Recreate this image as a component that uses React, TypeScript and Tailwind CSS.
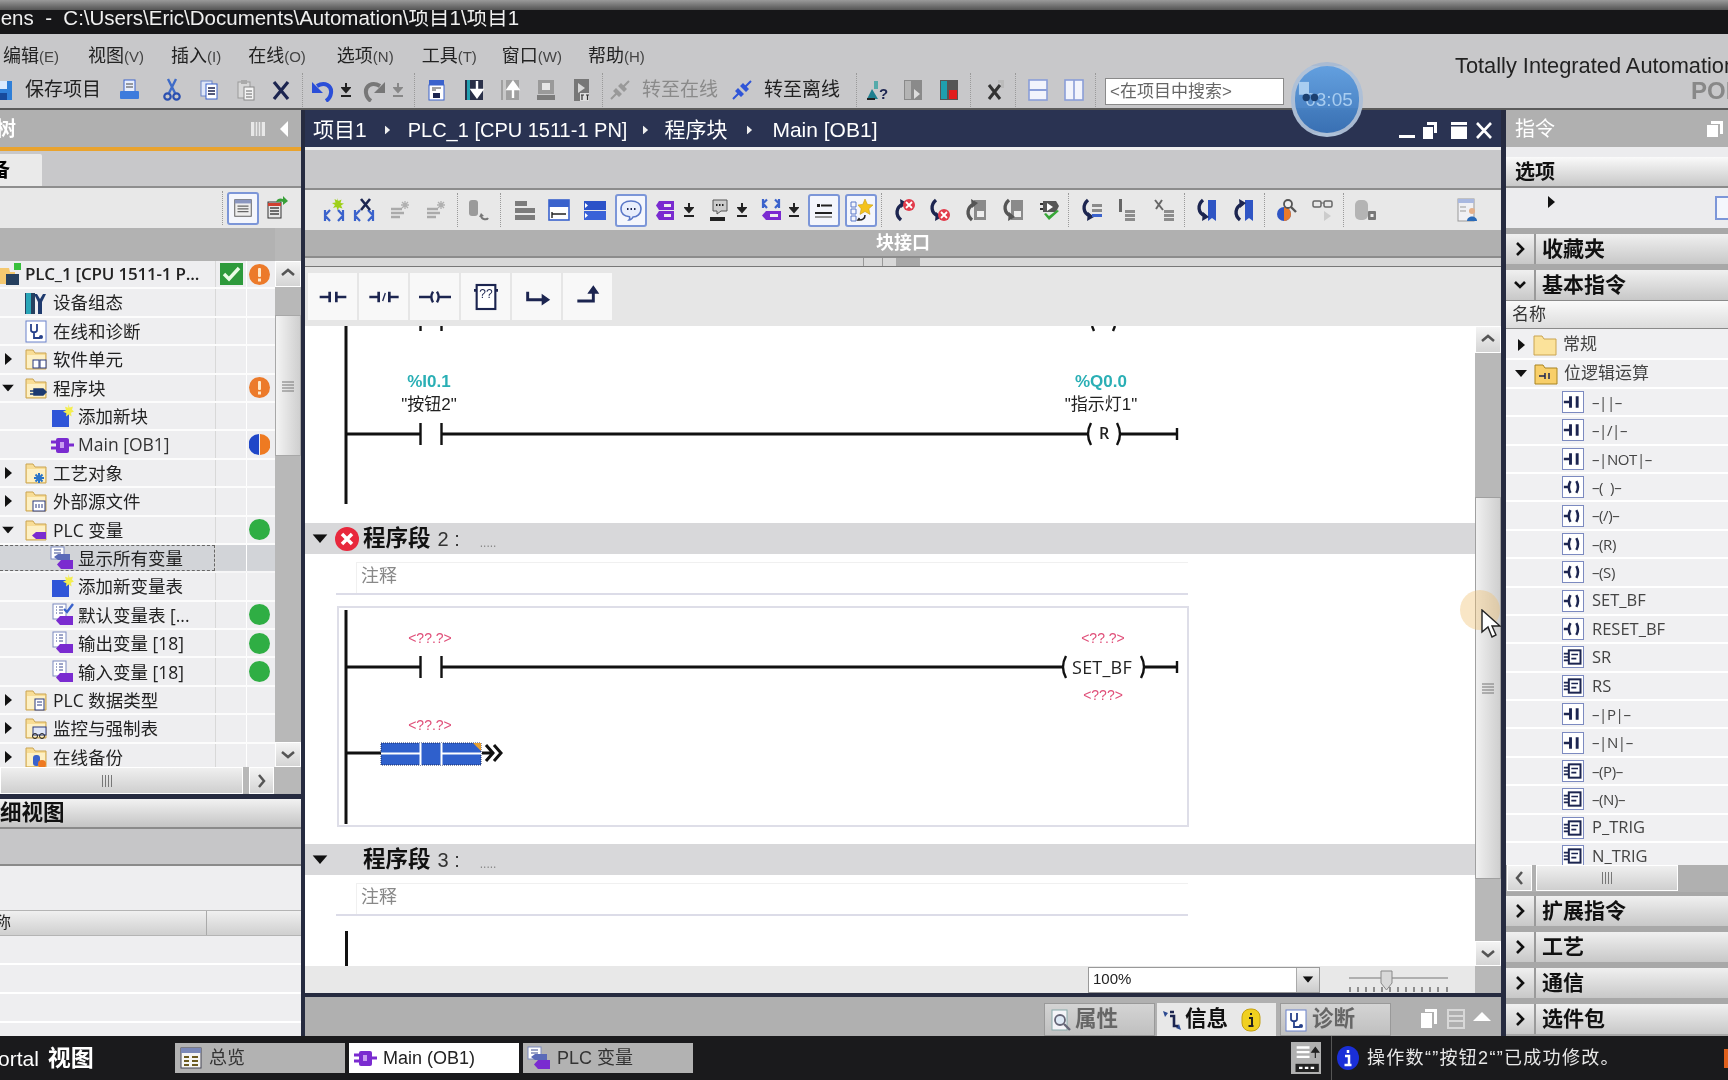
import type { ReactNode } from 'react';

const NAVY = '#1c2550';
const BLUE = '#3a62cc';
const PURPLE = '#7a2bd0';

function I({ children, className = '', size = 24 }: { children: ReactNode; className?: string; size?: number }) {
  return (
    <svg width={size} height={size} viewBox="0 0 24 24" className={`shrink-0 ${className}`}>
      {children}
    </svg>
  );
}

function Sep({ className = '' }: { className?: string }) {
  return <div className={`h-[34px] w-px shrink-0 border-l border-dotted border-[#9a9a9a] ${className}`} />;
}

function DownMark({ className = '', color = '#222' }: { className?: string; color?: string }) {
  return (
    <svg width="10" height="18" viewBox="0 0 10 18" className={`shrink-0 ${className}`}>
      <path d="M5 2v7M1.5 7 5 11l3.5-4z" stroke={color} strokeWidth="2" fill={color} />
      <rect x="0" y="14" width="10" height="2" fill={color} />
    </svg>
  );
}

function Toggle({ children, className = '' }: { children: ReactNode; className?: string }) {
  return (
    <div className={`flex h-[33px] w-[32px] shrink-0 items-center justify-center rounded-[3px] border-2 border-[#7c96d8] bg-[#f4f6fc] ${className}`}>
      {children}
    </div>
  );
}

/* ---- toolbar drawings ---- */
const Floppy = ({ className }: { className?: string }) => (
  <I className={className}><rect x="2" y="3" width="20" height="19" fill="#2f7fd8" /><rect x="7" y="3" width="10" height="8" fill="#dbeafe" /><rect x="7" y="15" width="10" height="7" fill="#174a9c" /></I>
);
const Printer = ({ className }: { className?: string }) => (
  <I className={className}><rect x="7" y="2" width="11" height="12" fill="#e8eefc" stroke="#3a62cc" /><path d="M9 6h7M9 9h7" stroke="#444" /><rect x="3" y="13" width="19" height="8" rx="1" fill="#3d7bdc" /></I>
);
const Scissors = ({ className }: { className?: string }) => (
  <I className={className}><path d="M8 1l7 14M16 1 9 15" stroke="#3f6cc8" strokeWidth="2.4" /><circle cx="7.5" cy="18.5" r="3.2" fill="none" stroke="#2a4fb0" strokeWidth="2.2" /><circle cx="16.5" cy="18.5" r="3.2" fill="none" stroke="#2a4fb0" strokeWidth="2.2" /></I>
);
const CopyDoc = ({ className }: { className?: string }) => (
  <I className={className}><rect x="4" y="3" width="11" height="15" fill="#dfe6f7" stroke="#6d86c8" /><rect x="9" y="6" width="11" height="15" fill="#fff" stroke="#3a62cc" /><path d="M11 10h7M11 13h7M11 16h7" stroke="#1c2550" strokeWidth="1.4" /></I>
);
const PasteDoc = ({ className }: { className?: string }) => (
  <I className={className}><rect x="4" y="4" width="12" height="16" fill="#d8d8d8" stroke="#999" /><rect x="7" y="2" width="6" height="4" fill="#aaa" /><rect x="10" y="9" width="10" height="13" fill="#f4f4f4" stroke="#888" /><path d="M12 13h6M12 16h6M12 19h6" stroke="#666" /></I>
);
const Cross = ({ className, color = NAVY }: { className?: string; color?: string }) => (
  <I className={className}><path d="M5 4l14 17M19 4 5 21" stroke={color} strokeWidth="3.2" /></I>
);
const Undo = ({ className, color = '#2a4ed8', flip }: { className?: string; color?: string; flip?: boolean }) => (
  <I className={className}><g transform={flip ? 'translate(24 0) scale(-1 1)' : undefined}><path d="M2 4v11h11z" fill={color} /><path d="M7 8c8-5 15 0 14 7-.4 3-2 6-5 8" fill="none" stroke={color} strokeWidth="4" /></g></I>
);
const Compile = ({ className }: { className?: string }) => (
  <I className={className}><rect x="5" y="2" width="15" height="5" fill="#3a62cc" /><rect x="5" y="7" width="15" height="15" fill="#fff" stroke="#3a62cc" /><path d="M8 10h9M8 12h4" stroke="#444" /><rect x="9" y="15" width="7" height="5" fill="#1c2550" /></I>
);
const Load = ({ up, className }: { up?: boolean; className?: string }) => (
  <I className={className}><rect x="3" y="2" width="18" height="20" fill={up ? '#a0a0a0' : '#2a3048'} /><rect x="5" y="2" width="3" height="20" fill={up ? '#c8c8c8' : '#23a0b0'} /><path d={up ? 'M15 20V10M10 11l5-7 5 7z' : 'M15 3v10M10 12l5 7 5-7z'} stroke="#fff" strokeWidth="2.4" fill="#fff" /></I>
);
const Station = ({ className }: { className?: string }) => (
  <I className={className}><rect x="4" y="2" width="16" height="14" fill="#9a9a9a" /><rect x="8" y="5" width="8" height="7" fill="#e6e6e6" /><rect x="3" y="17" width="18" height="5" fill="#7c7c7c" /></I>
);
const Rt = ({ className }: { className?: string }) => (
  <I className={className}><rect x="5" y="1" width="15" height="22" fill="#777" /><path d="M9 5l7 5-7 5z" fill="#d8d8d8" /><rect x="11" y="15" width="9" height="8" fill="#ddd" /><path d="M12 17h3M13 17v5M17 17h3M18.500 17v5" stroke="#333" strokeWidth="1.200" /></I>
);
const Plug = ({ className, color }: { className?: string; color: string }) => (
  <I className={className}><path d="M3 21 10 14M14 10l7-7" stroke={color} strokeWidth="2" /><path d="M8 10l6 6-3 3-6-6zM16 14l-6-6 3-3 6 6z" fill={color} /></I>
);
const Net = ({ className }: { className?: string }) => (
  <I className={className}><path d="M8 11l-5 10h11z" fill="#1f7f8f" /><path d="M10 3h4v8h-4z" fill="#5aa" /><path d="M3 21h8" stroke="#222" strokeWidth="2" /><text x="15" y="21" fontSize="15" fontWeight="700" fontFamily="Liberation Sans" fill={NAVY}>?</text></I>
);
const Split = ({ className, red }: { className?: string; red?: boolean }) => (
  <I className={className}><rect x="3" y="2" width="18" height="20" fill={red ? '#555' : '#8a8a8a'} /><rect x="4" y="3" width="6" height="18" fill={red ? '#1f9fae' : '#b4b4b4'} />{red ? <rect x="12" y="12" width="8" height="9" fill="#e21c1c" /> : <path d="M13 11l6 5-6 5z" fill="#ddd" />}</I>
);
const SmallX = ({ className }: { className?: string }) => (
  <I className={className}><path d="M15 2h6v8h-3V5h-3z" fill="#bbb" /><path d="M6 7l11 14M17 7 6 21" stroke="#333" strokeWidth="3" /></I>
);
const Panes = ({ vertical, className }: { vertical?: boolean; className?: string }) => (
  <I className={className}><rect x="3" y="2" width="18" height="20" fill="#f2f4fc" stroke="#8a9ed8" strokeWidth="1.6" />{vertical ? <path d="M12 2v20" stroke="#8a9ed8" strokeWidth="1.6" /> : <path d="M3 12h18" stroke="#8a9ed8" strokeWidth="2" />}</I>
);

/* editor toolbar */
const Kk = () => (
  <path d="M3 12v11M3 17.500 8 12M3 17.500 8 23M21 12v11M21 17.500 16 12M21 17.500 16 23" stroke={BLUE} strokeWidth="2.200" fill="none" />
);
const NetAdd = ({ className }: { className?: string }) => (
  <I className={className}><Kk /><path d="M15 0l1.500 3 3-1.500-1 3.500 3.500.5-3 2 1.500 3-3.500-1-1.500 3-1-3.500-3.500 1 2-3-3-2 3.500-.5-1-3.500 3 1.500z" fill="#9ed018" /></I>
);
const NetDel = ({ className }: { className?: string }) => (
  <I className={className}><Kk /><path d="M9 1l9 11M18 1 9 12" stroke={NAVY} strokeWidth="2.600" /></I>
);
const Stars = ({ className }: { className?: string }) => (
  <I className={className}><path d="M3 11h11M3 15h13M3 19h9" stroke="#aaa" strokeWidth="2.600" /><path d="M17 3v8M13 7h8M14 4l6 6M20 4l-6 6" stroke="#b0b0b0" strokeWidth="1.300" /></I>
);
const DbBack = ({ className }: { className?: string }) => (
  <I className={className}><rect x="3" y="2" width="9" height="16" rx="3" fill="#9a9a9a" /><path d="M22 20c-1 2-6 2-7-2" stroke="#777" strokeWidth="2" fill="none" /><path d="M13 19l2-4 3 3z" fill="#777" /></I>
);
const Tree3 = ({ className }: { className?: string }) => (
  <I className={className}><path d="M3 3h12v5H3zM3 10h20v5H3zM3 17h20v5H3z" fill="#7c7c7c" /></I>
);
const Expand = ({ className }: { className?: string }) => (
  <I className={className}><rect x="2" y="2" width="20" height="20" fill="#fff" stroke="#3a62cc" strokeWidth="1.600" /><rect x="2" y="2" width="20" height="7" fill="#3a62cc" /><path d="M5 14v6M5 16h14" stroke="#222" strokeWidth="1.400" /></I>
);
const Collapse = ({ className }: { className?: string }) => (
  <I className={className}><rect x="1" y="3" width="22" height="9" fill="#2b52c8" /><rect x="1" y="13" width="22" height="9" fill="#3a62d8" /><path d="M2 5l3 2.500-3 2.500zM2 15l3 2.500-3 2.500z" fill="#fff" /></I>
);
const Bubble = () => (
  <I><path d="M12 3c6 0 10 3 10 8s-4 8-8 8c-1 2-2 3-4 3 1-1 1-2 .5-3.200C5 18 2 15 2 11c0-5 4-8 10-8z" fill="#e8eefc" stroke="#5a78c8" strokeWidth="1.600" /><path d="M8 11h1.500M11.500 11H13M15 11h1.500" stroke="#1c2550" strokeWidth="2" /></I>
);
const TagIo = ({ className }: { className?: string }) => (
  <I className={className}><path d="M6 3h15v9H6l-3-4.500z" fill={PURPLE} /><path d="M6 13h15v9H6l-3-4.500z" fill={PURPLE} /><path d="M11 6h7v3h-7zM11 16h7v3h-7z" fill="#eee" /></I>
);
const Comments = ({ className }: { className?: string }) => (
  <I className={className}><path d="M6 2h14v11H14l-4 3v-3H6z" fill="#ccc" stroke="#555" /><path d="M9 7h1.500M12 7h1.500M15 7h1.500" stroke="#222" strokeWidth="2" /><path d="M3 19h15v4H3z" fill="#222" /></I>
);
const KkTag = ({ className }: { className?: string }) => (
  <I className={className}><path d="M4 1v9M4 5.500l4-4M4 5.500l4 4.500M20 1v9M20 5.500l-4-4M20 5.500l-4 4.500" stroke={BLUE} strokeWidth="2.200" fill="none" /><path d="M7 13h15v9H7l-4-4.500z" fill={PURPLE} /><path d="M11 16h8v3h-8z" fill="#eee" /></I>
);
const Lines = () => (
  <I><path d="M5 6h3v3H5z" fill="#222" /><path d="M9 7.500h11M3 15h17" stroke="#222" strokeWidth="2" /><path d="M3 19h17" stroke="#777" strokeWidth="1.500" /></I>
);
const FavStar = () => (
  <I><path d="M2 4h5v5H2zM2 11h5v5H2zM2 18h5v5H2z" fill="none" stroke="#5a78c8" /><path d="M16 1l2.400 5.400 5.600.6-4.200 3.800 1.200 5.600-5-2.900-5 2.900 1.200-5.600L9 7l4.800-.6z" fill="#f4c21c" stroke="#c49a10" strokeWidth=".6" /><path d="M12 22h-3l1.500-2M10 22c5 0 6-2 6-5" stroke="#222" strokeWidth="1.500" fill="none" /></I>
);
// C shaped arrow, head on top, or at the bottom with down
const Arc = ({ down, color = NAVY }: { down?: boolean; color?: string }) => (
  <g transform={down ? 'translate(0 24) scale(1 -1)' : undefined}><path d="M11 6C4 9 3 17 9 22" fill="none" stroke={color} strokeWidth="3.400" /><path d="M8 1l7 4-6 5z" fill={color} /></g>
);
const RedDot = ({ x, y }: { x: number; y: number }) => (
  <g><circle cx={x} cy={y} r="6" fill="#e23b4b" /><path d={`M${x - 3} ${y - 3}l6 6M${x + 3} ${y - 3}l-6 6`} stroke="#fff" strokeWidth="1.800" /></g>
);
const ArcErr = ({ down, className }: { down?: boolean; className?: string }) => (
  <I className={className}><Arc down={down} /><RedDot x={17} y={down ? 17 : 7} /></I>
);
const ArcDb = ({ down, className }: { down?: boolean; className?: string }) => (
  <I className={className}><rect x="11" y="2" width="12" height="20" fill="#8a8a8a" /><rect x="14" y="13" width="7" height="6" fill="#eee" /><Arc down={down} color="#555" /></I>
);
const CheckBlock = ({ className }: { className?: string }) => (
  <I className={className}><path d="M5 3h13l3 5-3 6H5z" fill="#555" /><path d="M9 5l6 4-6 4z" fill="#fff" /><path d="M2 6h3M2 11h3" stroke="#333" strokeWidth="2" /><path d="M6 16l5 6 10-9-2-1-8 6-3-3z" fill="#38a838" /></I>
);
const ArcBars = ({ className }: { className?: string }) => (
  <I className={className}><Arc down /><path d="M13 6h10v3H13zM13 11h10v3H13z" fill="#8a8a8a" /><path d="M13 16h10v3H13z" fill="#3a62cc" /></I>
);
const BarsI = ({ className }: { className?: string }) => (
  <I className={className}><rect x="4" y="1" width="3" height="13" fill="#666" /><path d="M10 12h10v3H10zM10 16h10v3H10zM10 20h10v3H10z" fill="#8c8c8c" /></I>
);
const BarsX = ({ className }: { className?: string }) => (
  <I className={className}><path d="M2 2l8 10M9 2l-6 9" stroke="#666" strokeWidth="2" /><path d="M11 12h10v3H11zM11 16h10v3H11zM11 20h10v3H11z" fill="#8c8c8c" /></I>
);
const ArcMark = ({ down, className }: { down?: boolean; className?: string }) => (
  <I className={className}><path d="M14 2h8v21l-4-3-4 3z" fill="#2f55c4" /><Arc down={down} /></I>
);
const Inspect = ({ className }: { className?: string }) => (
  <I className={className}><circle cx="11" cy="16" r="7" fill="#2f55c4" /><path d="M11 9a7 7 0 0 1 0 14z" fill="#ea7a2a" /><circle cx="15" cy="6" r="4" fill="#eee" stroke="#555" strokeWidth="1.800" /><path d="M18 9l5 5" stroke="#555" strokeWidth="2.400" /></I>
);
const Glasses = ({ className }: { className?: string }) => (
  <I className={className}><rect x="2" y="3" width="8" height="6" rx="1.500" fill="none" stroke="#666" strokeWidth="1.500" /><rect x="13" y="3" width="8" height="6" rx="1.500" fill="none" stroke="#666" strokeWidth="1.500" /><path d="M10 5h3" stroke="#666" /><path d="M13 13l7 5-7 5z" fill="#ccc" /></I>
);
const DbLock = ({ className }: { className?: string }) => (
  <I className={className}><rect x="2" y="2" width="13" height="20" rx="5" fill="#b4b4b4" /><rect x="15" y="13" width="8" height="9" rx="1" fill="#777" /><rect x="17.500" y="16" width="3" height="3" fill="#eee" /></I>
);
const UserForm = ({ className }: { className?: string }) => (
  <I className={className}><rect x="3" y="1" width="16" height="22" fill="#f0f0f4" stroke="#999" /><rect x="3" y="1" width="16" height="4" fill="#a9b8e0" /><path d="M5 9h6M5 13h6" stroke="#999" /><circle cx="17" cy="13" r="3" fill="#e4b08a" /><path d="M12 23c0-6 10-6 10 0z" fill="#2a6ab8" /></I>
);

/* left-tree drawings */
const Folder = ({ children, className = '' }: { children?: ReactNode; className?: string }) => (
  <I className={className}><path d="M2 3h7l2 3h11v16H2z" fill="#f8dd96" stroke="#caa450" /><path d="M3 8h18v13H3z" fill="#fdf0c4" />{children}</I>
);
const GridMark = () => <><rect x="9" y="13" width="6" height="8" fill="#fff" stroke="#2b3a80" /><rect x="16" y="13" width="6" height="8" fill="#fff" stroke="#2b3a80" /></>;
const BlockMark = ({ color = '#1c3a70' }: { color?: string }) => <path d="M10 13h9l3 3-3 3h-9zM6 15h4M6 18h4" fill={color} stroke={color} strokeWidth="1.500" />;
const TagMark = () => <path d="M12 14h10v7H12l-4-3.500z" fill={PURPLE} />;
const AddSheet = ({ className }: { className?: string }) => (
  <I className={className}><rect x="2" y="6" width="17" height="17" fill="#2f55d8" /><path d="M18 0l1.600 3.400 3.400-1-1 3.400 2 1.600-3 1.400.6 3.600-3-1.800-2.600 2 .4-3.400-3.400-1.400 3-1.600-1-3.400 3.400 1z" fill="#f4ee50" /></I>
);
const Chip = ({ className }: { className?: string }) => (
  <I className={className}><rect x="6" y="5" width="13" height="15" rx="2" fill={PURPLE} /><path d="M1 9h6M1 15h6M18 12h6" stroke={PURPLE} strokeWidth="3" /><rect x="10" y="9" width="4" height="6" fill="#c89cf0" /></I>
);
const SheetTag = ({ check, className }: { check?: boolean; className?: string }) => (
  <I className={className}>
    <rect x="3" y="1" width="13" height="15" fill="#fff" stroke="#7c8ac0" />
    <path d="M6 4h1M9 4h4M6 7h1M9 7h4M6 10h1M9 10h4" stroke="#3a4a90" />
    {check && <path d="M14 6l3 3 6-8" fill="none" stroke="#3a62cc" strokeWidth="2.400" />}
    <path d="M10 13h13v9H10l-4-4.500z" fill={PURPLE} />
  </I>
);
const SheetsTag = ({ className }: { className?: string }) => (
  <I className={className}>
    <rect x="1" y="1" width="13" height="12" fill="#fff" stroke="#7c8ac0" />
    <path d="M4 4h7M4 7h7" stroke="#3a4a90" />
    <path d="M8 8h12v6H8l-4-3z" fill="#5a6ab8" />
    <path d="M11 14h12v9H11l-4-4.500z" fill={PURPLE} />
  </I>
);
const DevCfg = ({ className }: { className?: string }) => (
  <I className={className}><rect x="1" y="2" width="10" height="21" fill="#26405f" /><rect x="2" y="2" width="5" height="21" fill="#2aa6b8" /><path d="M13 3l3 5 3-5h3l-4 8v12h-4V11l-4-8z" fill="#1e3a6e" /></I>
);
const Steth = ({ className }: { className?: string }) => (
  <I className={className}><rect x="2" y="2" width="20" height="21" fill="#fff" stroke="#6a82cc" /><path d="M7 5v6c0 3 6 3 6 0V5M10 14v5h6" fill="none" stroke="#26408a" strokeWidth="1.800" /><circle cx="17" cy="18" r="2" fill="#26408a" /></I>
);
const Ok = () => (
  <svg width="23" height="22" viewBox="0 0 23 22"><rect width="23" height="22" fill="#2e9a3c" /><path d="M4 11l5 5 10-11" fill="none" stroke="#eafbe6" strokeWidth="3.400" /></svg>
);
const Warn = () => (
  <svg width="21" height="21" viewBox="0 0 21 21"><circle cx="10.500" cy="10.500" r="10.500" fill="#ec7a2a" /><rect x="9" y="4" width="3" height="9" rx="1" fill="#ffe8c8" /><rect x="9" y="14.500" width="3" height="3" fill="#ffe8c8" /></svg>
);
const Half = () => (
  <svg width="21" height="21" viewBox="0 0 21 21"><path d="M10 0a10.500 10.500 0 0 0 0 21z" fill="#1f46c8" /><path d="M11 0a10.500 10.500 0 0 1 0 21z" fill="#ee7a22" /></svg>
);
const Good = () => (
  <svg width="21" height="21" viewBox="0 0 21 21"><circle cx="10.500" cy="10.500" r="10.500" fill="#2fae44" /></svg>
);

type TreeRow = { label: string; icon: ReactNode; pad: string; arrow?: 'r' | 'd'; status?: ReactNode; selected?: boolean; ok?: boolean };

const tree: TreeRow[] = [
  { label: 'PLC_1 [CPU 1511-1 P...', pad: '', ok: true, status: <Warn />, icon: <I className="-ml-[2px] mr-[3px]"><path d="M2 6h9l1 4h5v12H2z" fill="#f4c870" /><rect x="8" y="12" width="13" height="11" fill="#26405f" /><rect x="16" y="1" width="7" height="7" fill="#38c03c" /></I> },
  { label: '设备组态', pad: 'pl-[24px]', icon: <DevCfg className="mr-[5px]" /> },
  { label: '在线和诊断', pad: 'pl-[24px]', icon: <Steth className="mr-[5px]" /> },
  { label: '软件单元', pad: 'pl-[24px]', arrow: 'r', icon: <Folder className="mr-[5px]"><GridMark /></Folder> },
  { label: '程序块', pad: 'pl-[24px]', arrow: 'd', status: <Warn />, icon: <Folder className="mr-[5px]"><BlockMark /></Folder> },
  { label: '添加新块', pad: 'pl-[50px]', icon: <AddSheet className="mr-[4px]" /> },
  { label: 'Main [OB1]', pad: 'pl-[50px]', status: <Half />, icon: <Chip className="mr-[4px]" /> },
  { label: '工艺对象', pad: 'pl-[24px]', arrow: 'r', icon: <Folder className="mr-[5px]"><path d="M15 12v10M10 17h10M11.500 13.500l7 7M18.500 13.500l-7 7" stroke="#2a74c8" strokeWidth="2" /></Folder> },
  { label: '外部源文件', pad: 'pl-[24px]', arrow: 'r', icon: <Folder className="mr-[5px]"><rect x="9" y="12" width="12" height="10" fill="#fff" stroke="#2b3a80" /><path d="M12 15v4M15 15v4M18 15v4" stroke="#2b3a80" /></Folder> },
  { label: 'PLC 变量', pad: 'pl-[24px]', arrow: 'd', status: <Good />, icon: <Folder className="mr-[5px]"><TagMark /></Folder> },
  { label: '显示所有变量', pad: 'pl-[50px]', selected: true, icon: <SheetsTag className="mr-[4px]" /> },
  { label: '添加新变量表', pad: 'pl-[50px]', icon: <AddSheet className="mr-[4px]" /> },
  { label: '默认变量表 [...', pad: 'pl-[50px]', status: <Good />, icon: <SheetTag check className="mr-[4px]" /> },
  { label: '输出变量 [18]', pad: 'pl-[50px]', status: <Good />, icon: <SheetTag className="mr-[4px]" /> },
  { label: '输入变量 [18]', pad: 'pl-[50px]', status: <Good />, icon: <SheetTag className="mr-[4px]" /> },
  { label: 'PLC 数据类型', pad: 'pl-[24px]', arrow: 'r', icon: <Folder className="mr-[5px]"><rect x="11" y="11" width="9" height="11" fill="#fff" stroke="#2b3a80" /><path d="M13 14h5M13 17h5" stroke="#2b3a80" /></Folder> },
  { label: '监控与强制表', pad: 'pl-[24px]', arrow: 'r', icon: <Folder className="mr-[5px]"><rect x="9" y="11" width="13" height="8" fill="#dfe6f7" stroke="#2b3a80" /><circle cx="11" cy="20" r="2.500" fill="none" stroke="#222" /><circle cx="18" cy="20" r="2.500" fill="none" stroke="#222" /></Folder> },
  { label: '在线备份', pad: 'pl-[24px]', arrow: 'r', icon: <Folder className="mr-[5px]"><rect x="9" y="10" width="7" height="11" rx="3" fill="#3a62cc" /><circle cx="18" cy="19" r="4" fill="#ee7a22" /></Folder> },
];

function Caret({ dir, className = '' }: { dir?: 'r' | 'd'; className?: string }) {
  if (dir === 'r') return <svg width="7" height="12" viewBox="0 0 7 12" className={`shrink-0 ${className}`}><path d="M0 0l7 6-7 6z" fill="#111" /></svg>;
  if (dir === 'd') return <svg width="12" height="7" viewBox="0 0 12 7" className={`shrink-0 ${className}`}><path d="M0 0h12L6 7z" fill="#111" /></svg>;
  return null;
}

function ScrollBtn({ dir, className = '' }: { dir: 'up' | 'down' | 'left' | 'right'; className?: string }) {
  const d = { up: 'M3 10l6-5 6 5', down: 'M3 6l6 5 6-5', left: 'M11 3 6 9l5 6', right: 'M6 3l5 6-5 6' }[dir];
  return (
    <div className={`flex shrink-0 items-center justify-center border border-white bg-gradient-to-b from-[#f4f4f4] to-[#d4d4d4] ${className}`}>
      <svg width="18" height="18" viewBox="0 0 18 18"><path d={d} fill="none" stroke="#555" strokeWidth="2.500" /></svg>
    </div>
  );
}

function ProjectTree() {
  return (
    <div className="flex h-[566px] shrink-0 bg-[#b8b8b8]">
      <div className="w-[275px] shrink-0 overflow-hidden">
        <div className="h-[33px] bg-[#b2b2b2]" />
        <div className="h-[506px] overflow-hidden">
          {tree.map((row) => (
            <div key={row.label} className={`flex h-[28.4px] items-center border-b-2 border-white/80 ${row.selected ? 'bg-[#d2d4d8]' : 'bg-[#eeeef0]'}`}>
              <div className={`relative flex h-full w-[215px] shrink-0 items-center whitespace-nowrap ${row.pad} ${row.selected ? 'border-y border-r border-dashed border-[#666]' : ''}`}>
                {row.arrow && <Caret dir={row.arrow} className={`absolute top-1/2 -translate-y-1/2 ${row.arrow === 'r' ? 'left-[5px]' : 'left-[2px]'}`} />}
                {row.icon}
                <span className={`font-['Open_Sans','Noto_Sans_CJK_SC',sans-serif] ${row.label.startsWith('PLC_1') ? 'text-[17px] font-semibold tracking-[-0.2px]' : 'text-[17.500px]'} ${row.label.startsWith('Main') ? 'text-[15.500px] text-[#333]' : 'text-[#222]'}`}>{row.label}</span>
              </div>
              <div className="flex h-full w-[31px] shrink-0 items-center justify-center border-l border-[#d8d8d8]">{row.ok && <Ok />}</div>
              <div className="flex h-full w-[29px] shrink-0 items-center justify-center border-l border-white pr-[3px]">{row.status}</div>
            </div>
          ))}
        </div>
        <div className="flex h-[27px] bg-[#b8b8b8]">
          <div className="flex w-[243px] items-center justify-center border border-white bg-gradient-to-b from-[#efefef] to-[#cfcfcf] pr-[30px] text-[#666]">
            <svg width="12" height="14" viewBox="0 0 12 14"><path d="M1.500 1v12M4.500 1v12M7.500 1v12M10.500 1v12" stroke="#777" /></svg>
          </div>
          <ScrollBtn dir="right" className="ml-[6px] h-[27px] w-[25px]" />
        </div>
      </div>
      <div className="flex h-[566px] w-[26px] shrink-0 flex-col bg-[#b8b8b8]">
        <div className="h-[33px]" />
        <ScrollBtn dir="up" className="h-[26px] w-[26px]" />
        <div className="h-[28px]" />
        <div className="flex h-[141px] items-center justify-center border border-[#a8a8a8] bg-gradient-to-r from-[#f4f4f4] to-[#cfcfcf]">
          <svg width="12" height="12" viewBox="0 0 12 12"><path d="M0 2h12M0 5h12M0 8h12M0 11h12" stroke="#777" /></svg>
        </div>
        <div className="h-[286px]" />
        <ScrollBtn dir="down" className="h-[25px] w-[26px]" />
        <div className="h-[27px]" />
      </div>
    </div>
  );
}

function LeftPanel() {
  return (
    <div className="flex h-full w-[301px] shrink-0 flex-col overflow-hidden">
      <div className="flex h-[37px] shrink-0 items-center bg-[#b0b0b0] text-[20px] text-white">
        <span className="-ml-[4px] font-bold">树</span>
        <svg width="16" height="16" viewBox="0 0 16 16" className="ml-[234px]"><path d="M1 1h14v14H1z" fill="#e8e8e8" /><path d="M5 1v14M8 1v14M11 1v14" stroke="#999" /></svg>
        <svg width="10" height="16" viewBox="0 0 10 16" className="ml-[13px]"><path d="M9 0v16L1 8z" fill="#fff" /></svg>
      </div>
      <div className="h-[4px] shrink-0 bg-[#e9a32e]" />
      <div className="flex h-[37px] shrink-0 items-end border-b-2 border-[#8e8e8e] bg-[#c8c8ca]">
        <div className="flex h-[32px] w-[42px] items-center overflow-hidden rounded-tr-[2px] bg-[#eaeaea] text-[20px] font-bold text-black">
          <span className="-ml-[10px]">备</span>
        </div>
      </div>
      <div className="flex h-[40px] shrink-0 items-center justify-end bg-[#e8e8e8] pr-[12px]">
        <Sep className="mr-[4px]" />
        <Toggle><I size={22}><rect x="3" y="3" width="18" height="18" fill="#eee" stroke="#555" /><rect x="3" y="3" width="18" height="4" fill="#8a96c0" /><path d="M6 10h12M6 13h12M6 16h12" stroke="#666" strokeWidth="1.500" /></I></Toggle>
        <I className="ml-[6px]"><rect x="3" y="6" width="13" height="16" fill="#e8e8e8" stroke="#333" /><path d="M5 12h9M5 15h9M5 18h9" stroke="#444" strokeWidth="1.500" /><path d="M11 6c1-4 5-4 7-3V0l5 5-5 4V6c-3-1-5 0-7 0z" fill="#38a038" /><rect x="3" y="7" width="13" height="3" fill="#d04030" /></I>
      </div>
      <ProjectTree />
      <div className="h-[5px] shrink-0 bg-[#262b40]" />
      <div className="flex h-[30px] shrink-0 items-center border-b-2 border-[#8a8a8a] bg-gradient-to-b from-[#f2f2f2] to-[#c4c4c4] text-[21.500px] font-bold text-[#111]">细视图</div>
      <div className="h-[37px] shrink-0 border-b-2 border-[#8a8a8a] bg-[#c6c6c8]" />
      <div className="h-[44px] shrink-0 bg-[#eeeef0]" />
      <div className="flex h-[26px] shrink-0 border-y border-[#b4b4b4] bg-gradient-to-b from-[#f0f0f0] to-[#cfcfcf] text-[16px] text-[#222]">
        <div className="flex w-[207px] items-center overflow-hidden border-r border-[#aaa]"><span className="-ml-[5px]">称</span></div>
      </div>
      <div className="h-[29px] shrink-0 border-b-2 border-white bg-[#eeeef0]" />
      <div className="h-[29px] shrink-0 border-b-2 border-white bg-[#eeeef0]" />
      <div className="h-[29px] shrink-0 border-b-2 border-white bg-[#eeeef0]" />
      <div className="flex-1 bg-[#eeeef0]" />
    </div>
  );
}

/* ---- ladder ---- */
function Pink({ className, text = '<??.?>' }: { className: string; text?: string }) {
  return <div className={`absolute w-[80px] -translate-x-1/2 -translate-y-1/2 text-center font-['Liberation_Sans',sans-serif] text-[14px] leading-none text-[#e0507a] ${className}`}>{text}</div>;
}

function NetworkHeader({ label, error }: { label: string; error?: boolean }) {
  return (
    <div className="flex h-[31px] shrink-0 items-center bg-[#d8d8da]">
      <Caret dir="d" className="ml-[9px] scale-125" />
      {error ? (
        <svg width="24" height="24" viewBox="0 0 24 24" className="ml-[9px]"><circle cx="12" cy="12" r="12" fill="#e8283c" /><path d="M7 7l10 10M17 7 7 17" stroke="#fff" strokeWidth="3.500" /></svg>
      ) : (
        <div className="ml-[9px] h-[24px] w-[24px]" />
      )}
      <span className="ml-[4px] text-[22.500px] font-bold text-[#111]">程序段</span>
      <span className="ml-[7px] text-[20px] text-[#333]">{label}</span>
      <span className="ml-[20px] mt-[8px] text-[12px] leading-none text-[#888]">.....</span>
    </div>
  );
}

function CommentRow() {
  return (
    <div className="flex h-[42px] shrink-0 pl-[31px]">
      <div className="h-[41px] w-[852px] border-b-2 border-[#dcdce8]">
        <div className="ml-[20px] mt-[8px] h-[31px] border-l border-t border-[#f0f0f0] pl-[4px] text-[18px] leading-[26px] text-[#888]">注释</div>
      </div>
    </div>
  );
}

function Editor() {
  return (
    <div className="relative flex h-full w-[1170px] shrink-0 flex-col overflow-hidden bg-white">
      <div className="relative h-[197px] shrink-0">
        <svg width="1170" height="197" className="absolute left-0 top-0">
          <path d="M41 0v178" stroke="#111" strokeWidth="3" />
          <path d="M41 108h74M137 108h646M815 108h57" stroke="#111" strokeWidth="3" />
          <path d="M115.500 97v22M136.500 97v22M115.500 0v5M136.500 0v5M872 102v12" stroke="#111" strokeWidth="2.400" />
          <path d="M786 97q-6 11 0 22M812 97q6 11 0 22M787 0l2 5M810 0l-2 5" stroke="#111" strokeWidth="2.400" fill="none" />
        </svg>
        <div className="absolute left-[124px] top-[55px] -translate-x-1/2 -translate-y-1/2 font-['Liberation_Sans',sans-serif] text-[17px] font-bold leading-none text-[#2aafb5]">%I0.1</div>
        <div className="absolute left-[124px] top-[78px] -translate-x-1/2 -translate-y-1/2 whitespace-nowrap text-[17px] leading-none text-[#222]">"按钮2"</div>
        <div className="absolute left-[796px] top-[55px] -translate-x-1/2 -translate-y-1/2 font-['Liberation_Sans',sans-serif] text-[17px] font-bold leading-none text-[#2aafb5]">%Q0.0</div>
        <div className="absolute left-[796px] top-[78px] -translate-x-1/2 -translate-y-1/2 whitespace-nowrap text-[17px] leading-none text-[#222]">"指示灯1"</div>
        <div className="absolute left-[799px] top-[107px] -translate-x-1/2 -translate-y-1/2 font-['Open_Sans',sans-serif] text-[16px] font-semibold leading-none text-[#222]">R</div>
      </div>
      <NetworkHeader label="2 :" error />
      <CommentRow />
      <div className="relative h-[248px] shrink-0">
        <div className="absolute left-[32px] top-[10px] h-[221px] w-[852px] border-2 border-[#dedee8]" />
        <svg width="1170" height="248" className="absolute left-0 top-0">
          <path d="M41 14v214" stroke="#111" strokeWidth="3" />
          <path d="M41 71h74M137 71h621M839 71h33M41 157h35" stroke="#111" strokeWidth="3" />
          <path d="M115.500 60v22M136.500 60v22M872 65v12" stroke="#111" strokeWidth="2.400" />
          <path d="M761 60q-6 11 0 22M836 60q6 11 0 22" stroke="#111" strokeWidth="2.400" fill="none" />
          <rect x="76" y="147" width="100" height="22" fill="#2f60cc" stroke="#1c2a60" strokeDasharray="1 1" />
          <path d="M76 157.500h39M137 157.500h39M115.500 147v22M136.500 147v22" stroke="#fff" strokeWidth="2" />
          <path d="M168 147h8v8z" fill="#e8a030" />
          <path d="M177 157h12M181 149l7 8-7 8M189 149l7 8-7 8" stroke="#111" strokeWidth="3" fill="none" />
        </svg>
        <Pink className="left-[125px] top-[42px]" />
        <Pink className="left-[798px] top-[42px]" />
        <Pink className="left-[798px] top-[99px]" text="<???>" />
        <Pink className="left-[125px] top-[129px]" />
        <div className="absolute left-[797px] top-[71px] -translate-x-1/2 -translate-y-1/2 font-['Open_Sans',sans-serif] text-[18px] leading-none tracking-[0.2px] text-[#222]">SET_BF</div>
      </div>
      <NetworkHeader label="3 :" />
      <CommentRow />
      <div className="flex-1 pl-[40px] pt-[14px]">
        <div className="h-[40px] w-[3px] bg-[#111]" />
      </div>
    </div>
  );
}

function Slider() {
  return (
    <div className="relative ml-[29px] h-[22px] w-[99px]">
      <svg width="99" height="24" viewBox="0 0 99 24">
        <path d="M0 9h99" stroke="#777" />
        <path d="M1 18v5M9 18v5M17 18v5M25 18v5M33 18v5M41 18v5M49 18v5M57 18v5M65 18v5M73 18v5M81 18v5M89 18v5M98 18v5" stroke="#333" />
        <path d="M32 2h11v12l-5.500 7-5.500-7z" fill="#d8d8d8" stroke="#888" />
      </svg>
    </div>
  );
}

const kopTiles = [
  <path key="a" d="M2 12h7.500M9.500 8v8M14.500 8v8M14.500 12H22" stroke={NAVY} strokeWidth="2" fill="none" />,
  <g key="b"><path d="M1 12h7M8 8v8M16 8v8M16 12h7" stroke={NAVY} strokeWidth="2" fill="none" /><path d="M11 15l2-6" stroke={NAVY} strokeWidth="1" /></g>,
  <path key="c" d="M0 12h8.500M10.500 8q-2.500 4 0 8M13.500 8q2.500 4 0 8M15.500 12H24" stroke={NAVY} strokeWidth="1.800" fill="none" />,
  <g key="d"><rect x="5" y="3" width="14" height="18" fill="#fff" stroke={NAVY} strokeWidth="1.600" /><path d="M3 7h2M19 7h2" stroke={NAVY} strokeWidth="2" /><text x="12" y="13" textAnchor="middle" fontSize="9" fontFamily="Liberation Sans" fill={NAVY}>??</text></g>,
  <g key="e"><path d="M5 8v6h12" stroke={NAVY} strokeWidth="2.200" fill="none" /><path d="M16 10.500l5 3.500-5 3.500z" fill={NAVY} stroke={NAVY} /></g>,
  <g key="f"><path d="M4 15h12V8" stroke={NAVY} strokeWidth="2.200" fill="none" /><path d="M12.500 9 16 4l3.500 5z" fill={NAVY} stroke={NAVY} /></g>,
];

function EditorToolbar() {
  return (
    <div className="flex h-[40px] shrink-0 items-center bg-[#e8e8e8]">
      <NetAdd className="ml-[17px]" />
      <NetDel className="ml-[6px]" />
      <Stars className="ml-[12px]" />
      <Stars className="ml-[12px]" />
      <Sep className="ml-[9px]" />
      <DbBack className="ml-[8px]" />
      <Sep className="ml-[10px]" />
      <Tree3 className="ml-[11px]" />
      <Expand className="ml-[11px]" />
      <Collapse className="ml-[12px]" />
      <Toggle className="ml-[8px]"><Bubble /></Toggle>
      <TagIo className="ml-[6px]" />
      <DownMark className="ml-[7px]" />
      <Comments className="ml-[13px]" />
      <DownMark className="ml-[6px]" />
      <KkTag className="ml-[12px]" />
      <DownMark className="ml-[6px]" />
      <Toggle className="ml-[9px]"><Lines /></Toggle>
      <Toggle className="ml-[5px]"><FavStar /></Toggle>
      <Sep className="ml-[4px]" />
      <ArcErr className="ml-[10px]" />
      <ArcErr down className="ml-[11px]" />
      <ArcDb className="ml-[12px]" />
      <ArcDb down className="ml-[13px]" />
      <CheckBlock className="ml-[14px]" />
      <Sep className="ml-[6px]" />
      <ArcBars className="ml-[10px]" />
      <BarsI className="ml-[12px]" />
      <BarsX className="ml-[14px]" />
      <Sep className="ml-[7px]" />
      <ArcMark down className="ml-[9px]" />
      <ArcMark className="ml-[13px]" />
      <Sep className="ml-[9px]" />
      <Inspect className="ml-[8px]" />
      <Glasses className="ml-[14px]" />
      <Sep className="ml-[8px]" />
      <DbLock className="ml-[9px]" />
      <UserForm className="ml-[78px]" />
    </div>
  );
}

function WorkArea() {
  return (
    <div className="flex h-full w-[1201px] shrink-0 flex-col border-r-[5px] border-[#262b40]">
      <div className="flex h-[37px] shrink-0 items-center bg-[#2a3352] pl-[8px] pt-[3px] text-[20px] text-white">
        <span className="text-[21px]">项目1</span>
        <Caret dir="r" className="ml-[17px] scale-75 invert" />
        <span className="ml-[17px] font-['Liberation_Sans',sans-serif]">PLC_1 [CPU 1511-1 PN]</span>
        <Caret dir="r" className="ml-[15px] scale-75 invert" />
        <span className="ml-[15px] text-[21px]">程序块</span>
        <Caret dir="r" className="ml-[19px] scale-75 invert" />
        <span className="ml-[19px] font-['Liberation_Sans',sans-serif] text-[21px]">Main [OB1]</span>
        <svg width="100" height="24" viewBox="0 0 100 24" className="ml-auto mr-[4px]">
          <rect x="2" y="17" width="16" height="3" fill="#fff" />
          <rect x="26" y="9" width="10" height="12" fill="#fff" /><path d="M30 4h10v11h-3V7h-7z" fill="#fff" />
          <rect x="54" y="4" width="16" height="17" fill="#fff" /><rect x="54" y="7" width="16" height="1.500" fill="#2a3352" />
          <path d="M80 5l14 15M94 5 80 20" stroke="#fff" strokeWidth="2.600" />
        </svg>
      </div>
      <div className="h-[3px] shrink-0 bg-[#f0f0f0]" />
      <div className="h-[40px] shrink-0 border-b-2 border-[#8c8c8c] bg-[#c8c8ca]" />
      <EditorToolbar />
      <div className="flex h-[28px] shrink-0 items-center justify-center border-b-2 border-[#8c8c8c] bg-[#b0b0b0] text-[18px] font-bold text-white">块接口</div>
      <div className="flex h-[9px] shrink-0 border-b border-[#777] bg-[#d8d8d8] pl-[558px]">
        <div className="h-full w-[20px] border-x border-[#999]" />
        <div className="ml-[13px] h-full w-[24px] bg-[#a8a8a8]" />
      </div>
      <div className="flex h-[59px] shrink-0 items-center gap-[2px] bg-[#e6e6e6] pl-[3px]">
        {kopTiles.map((t, i) => (
          <div key={i} className="flex h-[47px] w-[49px] items-center justify-center bg-[#f8f8f8]">
            <I size={32}>{t}</I>
          </div>
        ))}
      </div>
      <div className="flex h-[640px] shrink-0">
        <Editor />
        <div className="flex w-[26px] shrink-0 flex-col bg-[#b8b8b8]">
          <ScrollBtn dir="up" className="h-[27px] w-[26px]" />
          <div className="h-[144px]" />
          <div className="flex h-[382px] items-center justify-center border border-[#a0a0a0] bg-gradient-to-r from-[#f0f0f0] to-[#cfcfcf]">
            <svg width="12" height="12" viewBox="0 0 12 12"><path d="M0 2h12M0 5h12M0 8h12M0 11h12" stroke="#777" /></svg>
          </div>
          <div className="h-[62px]" />
          <ScrollBtn dir="down" className="h-[25px] w-[26px]" />
        </div>
      </div>
      <div className="flex h-[27px] shrink-0 items-center bg-[#e8e8e8] pl-[783px]">
        <div className="flex h-[26px] w-[232px] items-center justify-between border border-[#999] bg-white pl-[4px] font-['Liberation_Sans',sans-serif] text-[15px] text-[#222]">
          100%
          <div className="flex h-full w-[23px] items-center justify-center border-l border-[#aaa] bg-gradient-to-b from-[#f0f0f0] to-[#ccc]"><Caret dir="d" className="scale-90" /></div>
        </div>
        <Slider />
        <div className="ml-auto h-full w-[26px] bg-[#b8b8b8]" />
      </div>
      <div className="h-[4px] shrink-0 bg-[#262b40]" />
      <div className="flex flex-1 items-end bg-[#b0b0b0] pl-[739px]">
        <div className="flex h-[33px] w-[111px] items-center border border-[#999] bg-gradient-to-b from-[#d4d4d4] to-[#c0c0c0] pl-[4px] text-[21.500px] font-bold text-[#666]">
          <I className="mr-[2px]"><rect x="3" y="2" width="15" height="20" fill="#f4f4f8" stroke="#8aa" /><circle cx="11" cy="12" r="5" fill="#dfeaf6" stroke="#667" strokeWidth="1.800" /><path d="M15 16l6 6" stroke="#667" strokeWidth="2.400" /></I>属性
        </div>
        <div className="ml-[2px] flex h-[33px] w-[119px] items-center bg-[#e8e8e8] pl-[3px] text-[21.500px] font-bold text-[#111]">
          <I className="mr-[1px]"><path d="M3 3l5 2-3 4zM21 22l-5-2 3-4z" fill="#2c4a90" /><path d="M10 4h4M10 8h4v10h4" stroke="#1c2550" strokeWidth="2.600" fill="none" /></I>信息
          <svg width="20" height="24" viewBox="0 0 20 24" className="ml-[13px]"><rect x="1" y="1" width="18" height="22" rx="8" fill="#f0d020" stroke="#c4a010" /><path d="M10 5v2M8 10h3v8M7.500 18h5" stroke="#222" strokeWidth="2" fill="none" /></svg>
        </div>
        <div className="ml-[4px] flex h-[33px] w-[111px] items-center border border-[#999] bg-gradient-to-b from-[#d4d4d4] to-[#c0c0c0] pl-[3px] text-[21.500px] font-bold text-[#666]">
          <Steth className="mr-[4px]" />诊断
        </div>
        <svg width="80" height="24" viewBox="0 0 80 24" className="mb-[6px] ml-[29px]">
          <rect x="1" y="7" width="11" height="15" fill="#fff" /><path d="M5 3h12v15h-3V6H5z" fill="#fff" />
          <rect x="28" y="4" width="16" height="18" fill="none" stroke="#d8d8d8" strokeWidth="2" /><path d="M28 10h16M28 15h16" stroke="#d8d8d8" strokeWidth="2" />
          <path d="M53 15l9-9 9 9z" fill="#fff" />
        </svg>
      </div>
    </div>
  );
}

/* ---- instructions ---- */
function Accordion({ title, open }: { title: string; open?: boolean }) {
  return (
    <div className="flex h-[30px] shrink-0 bg-gradient-to-b from-[#f0f0f0] to-[#c8c8c8]">
      <div className="flex w-[30px] items-center justify-center border-r-2 border-[#9a9a9a]">
        <svg width="14" height="14" viewBox="0 0 14 14"><path d={open ? 'M2 4l5 5 5-5' : 'M4 1l6 6-6 6'} fill="none" stroke="#111" strokeWidth="2.600" /></svg>
      </div>
      <span className="ml-[6px] text-[21px] font-bold leading-[30px] text-[#111]">{title}</span>
    </div>
  );
}

const BitIc = () => <><path d="M1 12h8" stroke={NAVY} strokeWidth="3" /><path d="M9 5v14M17 5v14" stroke={NAVY} strokeWidth="3.500" /></>;
const CoilIc = () => <><path d="M1 12h5" stroke={NAVY} strokeWidth="3" /><path d="M9 5q-4 7 0 14M16 5q4 7 0 14" stroke={NAVY} strokeWidth="3" fill="none" /></>;
const BoxIc = () => <><rect x="7" y="4" width="14" height="16" fill="#fff" stroke={NAVY} strokeWidth="2.400" /><path d="M1 8h6M1 12h6M1 16h6M10 9h8M10 14h6" stroke={NAVY} strokeWidth="2" /></>;

const instr: [string, 'b' | 'c' | 'x', boolean?][] = [
  ['–||–', 'b', true], ['–|/|–', 'b', true], ['–|NOT|–', 'b', true], ['–(  )–', 'c', true], ['–(/)–', 'c', true], ['–(R)', 'c', true], ['–(S)', 'c', true],
  ['SET_BF', 'c'], ['RESET_BF', 'c'], ['SR', 'x'], ['RS', 'x'], ['–|P|–', 'b', true], ['–|N|–', 'b', true], ['–(P)–', 'x', true], ['–(N)–', 'x', true], ['P_TRIG', 'x'], ['N_TRIG', 'x'],
];

function RightPanel() {
  return (
    <div className="flex h-full flex-1 flex-col overflow-hidden bg-[#a8a8a8]">
      <div className="flex h-[37px] shrink-0 items-center justify-between bg-[#b0b0b0] pl-[9px] pr-[5px] text-[20px] text-white">
        指令
        <svg width="16" height="16" viewBox="0 0 16 16"><rect x="0" y="4" width="11" height="12" fill="#fff" /><path d="M4 0h12v13h-3V3H4z" fill="#fff" /></svg>
      </div>
      <div className="h-[10px] shrink-0 bg-[#ececee]" />
      <div className="flex h-[31px] shrink-0 items-center border-b-2 border-[#8a8a8a] bg-gradient-to-b from-[#fafafa] to-[#c8c8c8] pl-[9px] text-[20px] font-bold text-[#111]">选项</div>
      <div className="flex h-[40px] shrink-0 items-start bg-[#ececee] pl-[42px] pt-[8px]">
        <Caret dir="r" />
        <div className="ml-[160px] h-[24px] w-[20px] shrink-0 border-2 border-[#7c96d8] bg-[#f4f6fc]" />
      </div>
      <div className="h-[6px] shrink-0" />
      <Accordion title="收藏夹" />
      <div className="h-[6px] shrink-0" />
      <Accordion title="基本指令" open />
      <div className="h-[29px] shrink-0 border-y border-[#8a8a8a] bg-gradient-to-b from-[#fafafa] to-[#dcdcdc] pl-[6px] text-[17px] leading-[27px] text-[#333]">名称</div>
      <div className="h-[536px] shrink-0 overflow-hidden bg-[#f0f0f2] pt-[3px] text-[#444]">
        <div className="flex h-[28.400px] items-center border-b-2 border-white">
          <Caret dir="r" className="ml-[12px]" />
          <I className="ml-[8px]"><path d="M1 3h8l2 3h12v16H1z" fill="#fbe29a" stroke="#caa450" /></I>
          <span className="ml-[6px] text-[17px]">常规</span>
        </div>
        <div className="flex h-[28.400px] items-center border-b-2 border-white">
          <Caret dir="d" className="ml-[9px]" />
          <I className="ml-[7px]"><path d="M1 3h8l2 3h12v16H1z" fill="#f8cf6a" stroke="#a98420" /><path d="M5 14h6M11 11v6M15 11v6" stroke={NAVY} strokeWidth="1.500" /></I>
          <span className="ml-[6px] text-[17px]">位逻辑运算</span>
        </div>
        {instr.map(([label, kind, sym]) => (
          <div key={label} className="flex h-[28.400px] items-center border-b-2 border-white pl-[56px]">
            <div className="flex h-[22px] w-[22px] items-center justify-center border border-[#7c8ac0] bg-white">
              <I size={20}>{kind === 'b' ? <BitIc /> : kind === 'c' ? <CoilIc /> : <BoxIc />}</I>
            </div>
            <span className={`ml-[8px] whitespace-pre font-['Open_Sans',sans-serif] text-[#444] ${sym ? 'text-[15px] tracking-[-0.4px]' : 'text-[16.500px]'}`}>{label}</span>
          </div>
        ))}
      </div>
      <div className="flex h-[27px] shrink-0 bg-[#b0b0b0]">
        <ScrollBtn dir="left" className="ml-[1px] h-[26px] w-[25px]" />
        <div className="ml-[4px] flex h-[26px] w-[142px] items-center justify-center border border-white bg-gradient-to-b from-[#efefef] to-[#cfcfcf]">
          <svg width="12" height="14" viewBox="0 0 12 14"><path d="M1.500 1v12M4.500 1v12M7.500 1v12M10.500 1v12" stroke="#777" /></svg>
        </div>
      </div>
      <div className="h-[4px] shrink-0" />
      <Accordion title="扩展指令" />
      <div className="h-[6px] shrink-0" />
      <Accordion title="工艺" />
      <div className="h-[6px] shrink-0" />
      <Accordion title="通信" />
      <div className="h-[6px] shrink-0" />
      <Accordion title="选件包" />
    </div>
  );
}

function Tab({ label, active, icon, font }: { label: string; active?: boolean; icon: ReactNode; font?: boolean }) {
  return (
    <div className={`flex h-[30px] w-[170px] shrink-0 items-center pl-[4px] text-[18px] ${active ? 'bg-white text-[#222]' : 'bg-[#b2b2b2] text-[#333]'} ${font ? "font-['Liberation_Sans','Noto_Sans_CJK_SC',sans-serif]" : ''}`}>
      {icon}
      <span className="ml-[6px]">{label}</span>
    </div>
  );
}

const menus = [
  ['编辑', '(E)', ''],
  ['视图', '(V)', 'ml-[29px]'],
  ['插入', '(I)', 'ml-[27px]'],
  ['在线', '(O)', 'ml-[27px]'],
  ['选项', '(N)', 'ml-[31px]'],
  ['工具', '(T)', 'ml-[28px]'],
  ['窗口', '(W)', 'ml-[25px]'],
  ['帮助', '(H)', 'ml-[26px]'],
];

export default function App() {
  return (
    <div className="relative flex h-[1080px] w-[1728px] flex-col overflow-hidden bg-[#c8c8ca] font-['Liberation_Sans','Noto_Sans_CJK_SC',sans-serif] blur-[0.4px]">
      <div className="h-[10px] shrink-0 bg-gradient-to-b from-[#9a9a9a] to-[#555]" />
      <div className="flex h-[24px] shrink-0 items-center overflow-hidden whitespace-nowrap bg-[#161618] pb-[8px] text-[20.500px] text-[#f0f0f0]">
        <span className="-ml-[46px]">Siemens&nbsp;&nbsp;-&nbsp;&nbsp;C:\Users\Eric\Documents\Automation\项目1\项目1</span>
      </div>

      <div className="flex h-[76px] shrink-0 border-b-2 border-[#5a5a5a]">
        <div className="w-[1455px] shrink-0">
          <div className="flex h-[38px] items-center whitespace-nowrap pl-[3px] pt-[6px] text-[18px] text-[#222]">
            {menus.map(([a, b, c]) => (
              <span key={a} className={c}>{a}<span className="text-[15px] text-[#444]">{b}</span></span>
            ))}
          </div>
          <div className="flex h-[36px] items-center whitespace-nowrap text-[19px] text-[#222]">
            <Floppy className="-ml-[10px]" />
            <span className="ml-[11px]">保存项目</span>
            <Printer className="ml-[16px]" />
            <Scissors className="ml-[19px]" />
            <CopyDoc className="ml-[13px]" />
            <PasteDoc className="ml-[13px]" />
            <Cross className="ml-[11px]" />
            <Sep className="ml-[9px]" />
            <Undo className="ml-[7px]" />
            <DownMark className="ml-[7px]" />
            <Undo className="ml-[12px]" color="#777" flip />
            <DownMark className="ml-[6px]" color="#888" />
            <Sep className="ml-[11px]" />
            <Compile className="ml-[9px]" />
            <Load className="ml-[14px]" />
            <Load up className="ml-[12px]" />
            <Station className="ml-[12px]" />
            <Rt className="ml-[11px]" />
            <Sep className="ml-[9px]" />
            <Plug className="ml-[5px]" color="#999" />
            <span className="ml-[10px] text-[#8a8a8a]">转至在线</span>
            <Plug className="ml-[12px]" color="#2f55d8" />
            <span className="ml-[10px]">转至离线</span>
            <Sep className="ml-[16px]" />
            <Net className="ml-[7px]" />
            <Split className="ml-[13px]" />
            <Split red className="ml-[12px]" />
            <Sep className="ml-[9px]" />
            <SmallX className="ml-[12px]" />
            <Sep className="ml-[8px]" />
            <Panes className="ml-[10px]" />
            <Panes vertical className="ml-[12px]" />
            <Sep className="ml-[9px]" />
            <div className="ml-[9px] mt-[2px] flex h-[27px] w-[179px] shrink-0 items-center border border-[#8a8a8a] bg-white pl-[4px] text-[17px] leading-none text-[#666]">&lt;在项目中搜索&gt;</div>
          </div>
        </div>
        <div className="w-[305px] shrink-0 whitespace-nowrap pt-[21px] font-['Liberation_Sans',sans-serif] text-[21.800px] leading-none text-[#222]">
          Totally Integrated Automation
          <div className="ml-[236px] mt-[2px] text-[24px] font-bold text-[#888]">PORTAL</div>
        </div>
      </div>

      <div className="flex h-[926px] shrink-0">
        <LeftPanel />
        <div className="h-full w-[4px] shrink-0 bg-[#262b40]" />
        <WorkArea />
        <RightPanel />
      </div>

      <div className="flex flex-1 items-center whitespace-nowrap bg-[#1a1a1c] text-white">
        <span className="-ml-[16px] w-[191px] shrink-0 text-[21px]">Portal <span className="ml-[3px] text-[23px] font-bold">视图</span></span>
        <div className="flex gap-[4px]">
          <Tab label="总览" icon={<I><rect x="2" y="2" width="20" height="20" fill="#f4f4f4" stroke="#445" /><rect x="2" y="2" width="20" height="5" fill="#7a88b8" /><path d="M5 11h5M13 11h6M5 15h5M13 15h6M5 19h5M13 19h6" stroke="#6a5a20" strokeWidth="2" /></I>} />
          <Tab label="Main (OB1)" active font icon={<Chip />} />
          <Tab label="PLC 变量" font icon={<SheetsTag />} />
        </div>
        <div className="ml-[598px] flex h-[32px] w-[30px] shrink-0 items-center justify-center bg-[#b0b0b0]">
          <I size={28}><path d="M4 3h11M4 7h11M4 11h11" stroke="#fff" strokeWidth="2" /><path d="M20 12V5M17 7l3-4 3 4z" fill="#222" stroke="#222" /><rect x="3" y="17" width="20" height="7" fill="#222" /><path d="M6 20.500h3M11 20.500h3M16 20.500h3" stroke="#fff" strokeWidth="2" /></I>
        </div>
        <div className="ml-[10px] h-[44px] w-px shrink-0 bg-[#555]" />
        <svg width="24" height="26" viewBox="0 0 24 26" className="ml-[4px]"><ellipse cx="12" cy="13" rx="11" ry="12" fill="#1a2fd8" /><path d="M12 5v3M9 11h4v9M8.500 20h7" stroke="#fff" strokeWidth="2.500" fill="none" /></svg>
        <span className="ml-[7px] text-[18px] tracking-[1.300px] text-[#e8e8e8]">操作数“”按钮2“”已成功修改。</span>
        <div className="ml-auto h-[19px] w-[4px] bg-[#e0601c]" />
      </div>

      {/* timer overlay */}
      <div className="absolute left-[1291px] top-[62px] flex h-[75px] w-[72px] items-center justify-center rounded-full border-[4px] border-[#c4ccd8]/80 bg-gradient-to-b from-[#5d9ddf]/95 to-[#3a74b8]/95 text-[19px] text-[#a9cdf0]">
        <svg width="22" height="24" viewBox="0 0 24 24" className="absolute left-[3px] top-[14px]"><rect x="1" y="1" width="11" height="14" fill="#a9cdf0" /><circle cx="9" cy="18" r="4" fill="#1c4070" /><circle cx="18" cy="18" r="4" fill="#1c4070" /></svg>
        <span className="mt-[2px] pl-[4px]">03:05</span>
      </div>

      {/* recording cursor */}
      <div className="absolute left-[1460px] top-[590px] h-[40px] w-[40px] rounded-full bg-[#f0c070]/40" />
      <svg width="20" height="30" viewBox="0 0 20 30" className="absolute left-[1481px] top-[609px]">
        <path d="M1 1v22l6-5 4 10 4-2-4-9h8z" fill="#fff" stroke="#222" strokeWidth="1.400" />
      </svg>
    </div>
  );
}
